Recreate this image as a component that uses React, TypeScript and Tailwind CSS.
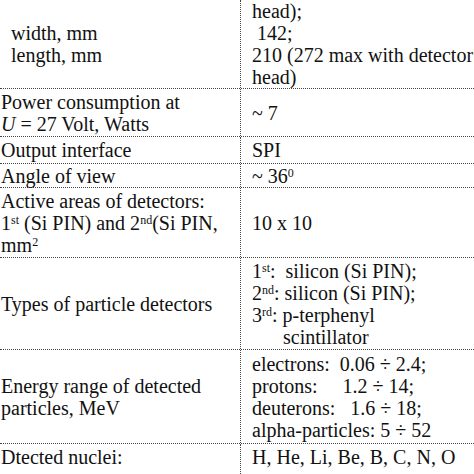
const line = 'leading-[22px] whitespace-pre';
const sup = 'text-[12px] leading-none';

type Row = {
  left: React.ReactNode;
  right: React.ReactNode;
  cls: string;
};

const rows: Row[] = [
  {
    cls: 'h-[88px] justify-center',
    left: (
      <>
        <div className={line}> </div>
        <div className={line}>  width, mm</div>
        <div className={line}>  length, mm</div>
        <div className={line}> </div>
      </>
    ),
    right: (
      <>
        <div className={line}>head);</div>
        <div className={line}> 142;</div>
        <div className={line}>210 (272 max with detector</div>
        <div className={line}>head)</div>
      </>
    ),
  },
  {
    cls: 'h-[47px] justify-center',
    left: (
      <>
        <div className={line}>Power consumption at</div>
        <div className={line}>
          <i>U</i> = 27 Volt, Watts
        </div>
      </>
    ),
    right: <div className={line}>~ 7</div>,
  },
  {
    cls: 'h-[26px] justify-center',
    left: <div className={line}>Output interface</div>,
    right: <div className={line}>SPI</div>,
  },
  {
    cls: 'h-[23px] justify-center',
    left: <div className={line}>Angle of view</div>,
    right: (
      <div className={line}>
        ~ 36<sup className={sup}>0</sup>
      </div>
    ),
  },
  {
    cls: 'h-[69px] justify-center',
    left: (
      <>
        <div className={line}>Active areas of detectors:</div>
        <div className={line}>
          1<sup className={sup}>st</sup> (Si PIN) and 2<sup className={sup}>nd</sup>(Si PIN,
        </div>
        <div className={line}>
          mm<sup className={sup}>2</sup>
        </div>
      </>
    ),
    right: <div className={line}>10 x 10</div>,
  },
  {
    cls: 'h-[91px] justify-center',
    left: <div className={line}>Types of particle detectors</div>,
    right: (
      <>
        <div className={line}>
          1<sup className={sup}>st</sup>:  silicon (Si PIN);
        </div>
        <div className={line}>
          2<sup className={sup}>nd</sup>: silicon (Si PIN);
        </div>
        <div className={line}>
          3<sup className={sup}>rd</sup>: p-terphenyl
        </div>
        <div className={`${line} pl-[31px]`}>scintillator</div>
      </>
    ),
  },
  {
    cls: 'h-[93px] justify-center',
    left: (
      <>
        <div className={line}>Energy range of detected</div>
        <div className={line}>particles, MeV</div>
      </>
    ),
    right: (
      <>
        <div className={line}>electrons:  0.06 ÷ 2.4;</div>
        <div className={line}>protons:     1.2 ÷ 14;</div>
        <div className={line}>deuterons:   1.6 ÷ 18;</div>
        <div className={line}>alpha-particles: 5 ÷ 52</div>
      </>
    ),
  },
  {
    cls: 'h-[60px] justify-start pt-[2px]',
    left: <div className={line}>Dtected nuclei:</div>,
    right: <div className={line}>H, He, Li, Be, B, C, N, O</div>,
  },
];

export default function App() {
  return (
    <div className="w-[474px] h-[474px] overflow-hidden bg-white text-[#111] text-[20px] font-['Liberation_Serif',serif]">
      {rows.map((r, i) => (
        <div
          key={i}
          className={`grid grid-cols-[241px_1fr] ${i < rows.length - 1 ? 'border-b border-dotted border-[#444]' : ''}`}
        >
          <div className={`flex flex-col border-r border-dotted border-[#444] pl-[1px] ${r.cls}`}>{r.left}</div>
          <div className={`flex flex-col pl-[11px] overflow-hidden ${r.cls}`}>{r.right}</div>
        </div>
      ))}
    </div>
  );
}
